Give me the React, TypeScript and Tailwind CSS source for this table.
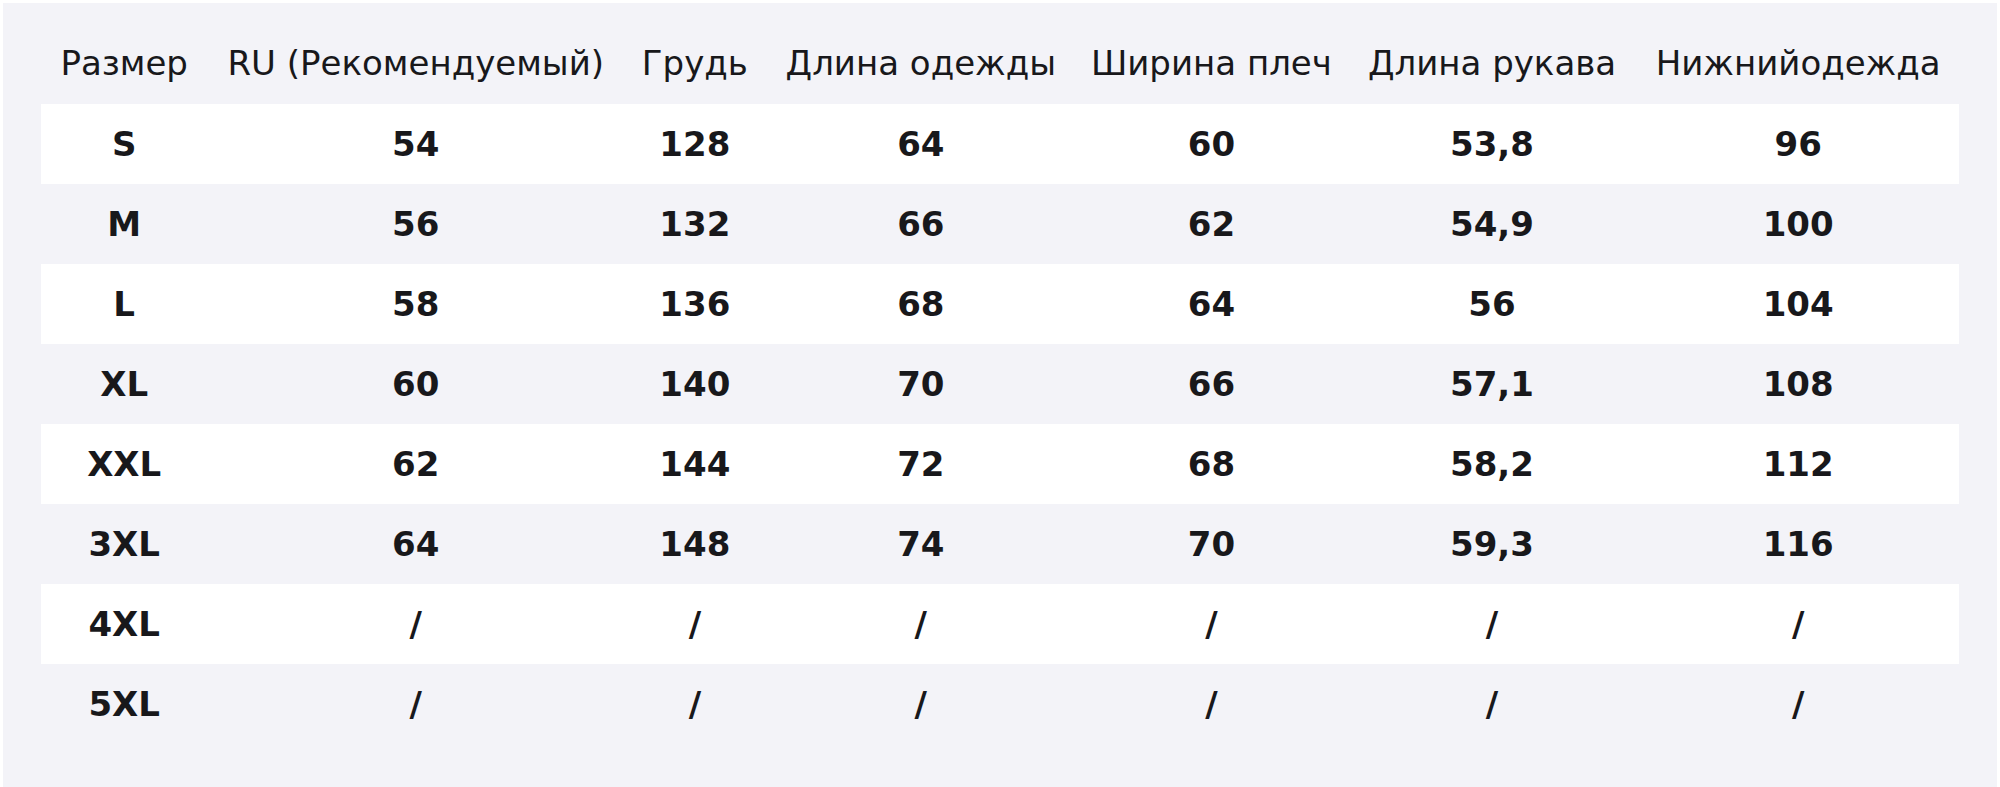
import React from 'react'

const headers = ['Размер', 'RU (Рекомендуемый)', 'Грудь', 'Длина одежды', 'Ширина плеч', 'Длина рукава', 'Нижнийодежда']

// ширины колонок сняты с макета
const colWidths = ['w-[166px]', 'w-[416px]', 'w-[141px]', 'w-[310px]', 'w-[270px]', 'w-[290px]', 'w-[321px]']

const rows: string[][] = [
    ['S', '54', '128', '64', '60', '53,8', '96'],
    ['M', '56', '132', '66', '62', '54,9', '100'],
    ['L', '58', '136', '68', '64', '56', '104'],
    ['XL', '60', '140', '70', '66', '57,1', '108'],
    ['XXL', '62', '144', '72', '68', '58,2', '112'],
    ['3XL', '64', '148', '74', '70', '59,3', '116'],
    ['4XL', '/', '/', '/', '/', '/', '/'],
    ['5XL', '/', '/', '/', '/', '/', '/'],
]

export default function App() {
    return (
        <div className="min-h-screen bg-white p-[3px] font-['DejaVu_Sans',sans-serif] text-[#18181b]">
            <div className="bg-[#f3f3f8] px-[38px] pt-[19px] pb-[43px]">
                <table className="w-full table-fixed border-collapse text-[34px]">
                    <colgroup>
                        {colWidths.map((w, i) => (
                            <col key={i} className={w} />
                        ))}
                    </colgroup>
                    <thead>
                        <tr className="h-[82px]">
                            {headers.map((h) => (
                                <th key={h} className="p-0 text-center align-middle font-normal whitespace-nowrap">
                                    {h}
                                </th>
                            ))}
                        </tr>
                    </thead>
                    <tbody>
                        {rows.map((row, i) => (
                            <tr key={row[0]} className={`h-20 ${i % 2 === 0 ? 'bg-white' : ''}`}>
                                {row.map((cell, j) => (
                                    <td key={j} className="p-0 text-center align-middle font-bold">
                                        {cell}
                                    </td>
                                ))}
                            </tr>
                        ))}
                    </tbody>
                </table>
            </div>
        </div>
    )
}
